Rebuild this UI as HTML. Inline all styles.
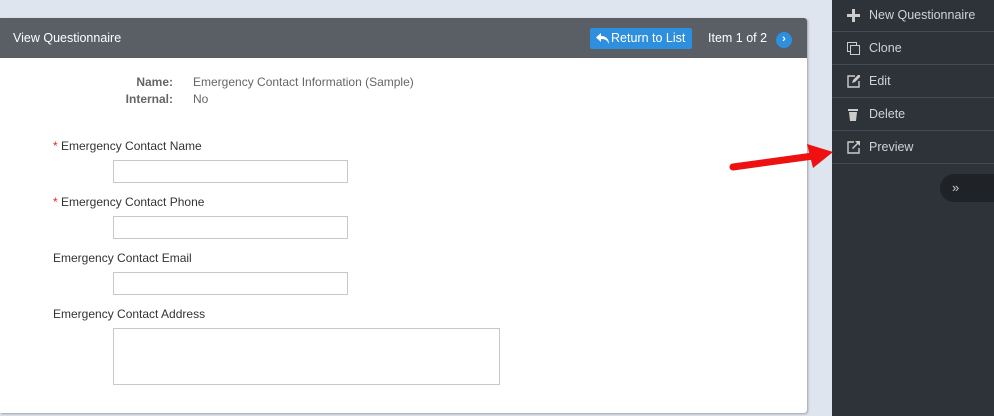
<!DOCTYPE html>
<html><head><style>
*{margin:0;padding:0;box-sizing:border-box}
body{width:994px;height:416px;background:#dfe5ee;font-family:"Liberation Sans",sans-serif;position:relative;overflow:hidden;font-size:12px}
.card{position:absolute;left:0;top:18px;width:807px;height:395px;background:#fff;box-shadow:1px 1px 2px rgba(0,0,0,.3);border-radius:0 3px 3px 0}
.hdr{height:40px;background:#5a5e65;border-radius:0 3px 0 0;color:#fff;position:relative}
.hdr .t{position:absolute;left:13px;top:13px;font-size:12.5px}
.btn{position:absolute;left:590px;top:10px;width:102px;height:21px;background:#2f8fdf;border-radius:2px;color:#fff;font-size:12.5px;line-height:21px;padding-left:21px}
.item{position:absolute;left:708px;top:13px;font-size:12.5px}
.nx{position:absolute;left:776px;top:14px;width:16px;height:16px;border-radius:50%;background:#2f8fdf;color:#fff;font-size:11px;line-height:15px;text-align:center;font-weight:bold}
.lbl{position:absolute;color:#666;font-weight:bold;text-align:right;width:80px;left:93px}
.val{position:absolute;left:193px;color:#666}
.f{position:absolute;left:53px;color:#333;font-size:12px}
.f b{color:#e22;font-weight:normal}
.in{position:absolute;left:113px;width:235px;height:23px;border:1px solid #c8c8c8}
.side{position:absolute;left:832px;top:0;width:162px;height:416px;background:#2e3339}
.si{height:33px;border-bottom:1px solid #454b52;color:#d0d3d6;font-size:12.5px;line-height:33px;padding-left:37px;position:relative}
.si i{position:absolute;left:15px;top:10px;width:13px;height:13px;display:block}
.si svg{display:block}
.tog{position:absolute;left:940px;top:174px;width:54px;height:28px;background:#1f2327;border-radius:14px 0 0 14px;color:#ccc;text-align:left;padding-left:12px;line-height:27px;font-size:13px}
</style></head><body>
<div class="card">
<div class="hdr"><span class="t">View Questionnaire</span>
<div class="btn"><svg style="position:absolute;left:6px;top:5px" width="13" height="11" viewBox="0 0 13 11"><path d="M5 0L0 4.5 5 9V6c4 0 6 1 8 5 0-5-3-8-8-8z" fill="#fff"/></svg>Return to List</div>
<span class="item">Item 1 of 2</span><div class="nx">›</div></div>
</div>
<div class="lbl" style="top:75px">Name:</div><div class="val" style="top:75px">Emergency Contact Information (Sample)</div>
<div class="lbl" style="top:92px">Internal:</div><div class="val" style="top:92px">No</div>
<div class="f" style="top:139px"><b>*</b> Emergency Contact Name</div>
<div class="in" style="top:160px"></div>
<div class="f" style="top:195px"><b>*</b> Emergency Contact Phone</div>
<div class="in" style="top:216px"></div>
<div class="f" style="top:251px">Emergency Contact Email</div>
<div class="in" style="top:272px"></div>
<div class="f" style="top:307px">Emergency Contact Address</div>
<div class="in" style="top:328px;width:387px;height:57px"></div>
<div class="side">
<div class="si" style="height:32px;line-height:30px"><i style="top:9px"><svg width="13" height="13"><path d="M5 0h3v5h5v3H8v5H5V8H0V5h5z" fill="#ccc"/></svg></i>New Questionnaire</div>
<div class="si"><i><svg width="13" height="13"><rect x="0.5" y="0.5" width="9" height="9" fill="none" stroke="#ccc"/><rect x="3.5" y="3.5" width="9" height="9" fill="#2e3339" stroke="#ccc"/></svg></i>Clone</div>
<div class="si"><i><svg width="13" height="13"><path d="M8 1H1v11h11V6" fill="none" stroke="#ccc" stroke-width="1.4"/><path d="M5 8l1-3 6-6 2 2-6 6z" fill="#ccc"/></svg></i>Edit</div>
<div class="si"><i><svg width="13" height="13"><rect x="1" y="1" width="10" height="2" fill="#ccc"/><path d="M2 4h8l-1 9H3z" fill="#ccc"/></svg></i>Delete</div>
<div class="si"><i><svg width="13" height="13"><path d="M7 1H1v11h11V7" fill="none" stroke="#ccc" stroke-width="1.4"/><path d="M8 0h5v5zM5 7l6-6 1 1-6 6z" fill="#ccc"/></svg></i>Preview</div>
</div>
<div class="tog">»</div>
<svg style="position:absolute;left:725px;top:140px" width="110" height="35"><path d="M8 27L88 16" stroke="#e11" stroke-width="7" stroke-linecap="round"/><path d="M82 4L108 12 88 28z" fill="#e11"/></svg>
</body></html>
